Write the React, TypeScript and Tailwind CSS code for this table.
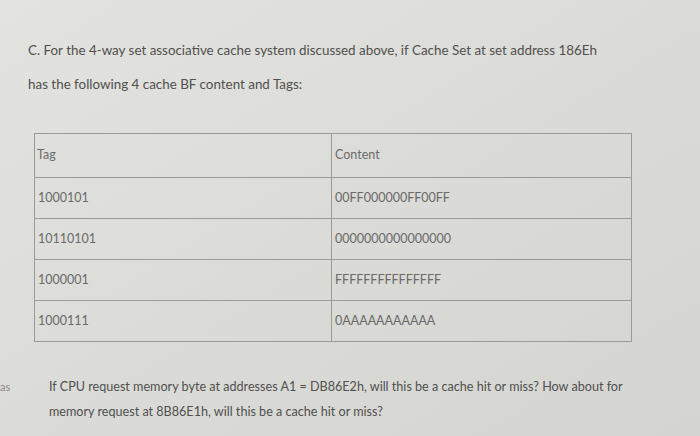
export default function App() {
  const rows = [
    ["1000101", "00FF000000FF00FF"],
    ["10110101", "0000000000000000"],
    ["1000001", "FFFFFFFFFFFFFFF"],
    ["1000111", "0AAAAAAAAAAA"],
  ];

  return (
    <div
      className="relative h-[436px] w-[700px] overflow-hidden bg-gradient-to-br from-[#e3e3df] via-[#dbdbd7] to-[#d4d4d0] text-[#505050]"
      style={{ fontFamily: "Lato, 'Open Sans', sans-serif" }}
    >
      <div className="pl-[28px] pt-[39px]">
        <p className="text-[13.4px] leading-[22px]">
          C. For the 4-way set associative cache system discussed above, if Cache Set at set address 186Eh
        </p>
        <p className="mt-[12px] text-[13.4px] leading-[22px]">has the following 4 cache BF content and Tags:</p>
      </div>

      <div className="ml-[34px] mt-[38px] w-[598px] border border-[#9a9a96] text-[12.5px] text-[#6a6a6a]">
        <div className="grid h-[44px] grid-cols-[297px_1fr] border-b border-[#9a9a96]">
          <div className="flex items-center border-r border-[#9a9a96] pl-[2px]">Tag</div>
          <div className="flex items-center pl-[3px]">Content</div>
        </div>
        {rows.map(([tag, content], i) => (
          <div
            key={tag}
            className={
              i < rows.length - 1
                ? "grid h-[41px] grid-cols-[297px_1fr] border-b border-[#9a9a96]"
                : "grid h-[40px] grid-cols-[297px_1fr]"
            }
          >
            <div className="flex items-center border-r border-[#9a9a96] pl-[3px]">{tag}</div>
            <div className="flex items-center pl-[3px]">{content}</div>
          </div>
        ))}
      </div>

      <div className="mt-[32px] flex text-[12.6px] leading-[25px]">
        <span className="w-[49px] text-[11px] text-[#8a8a8a]">as</span>
        <div>
          <p>If CPU request memory byte at addresses A1 = DB86E2h, will this be a cache hit or miss? How about for</p>
          <p>memory request at 8B86E1h, will this be a cache hit or miss?</p>
        </div>
      </div>
    </div>
  );
}
